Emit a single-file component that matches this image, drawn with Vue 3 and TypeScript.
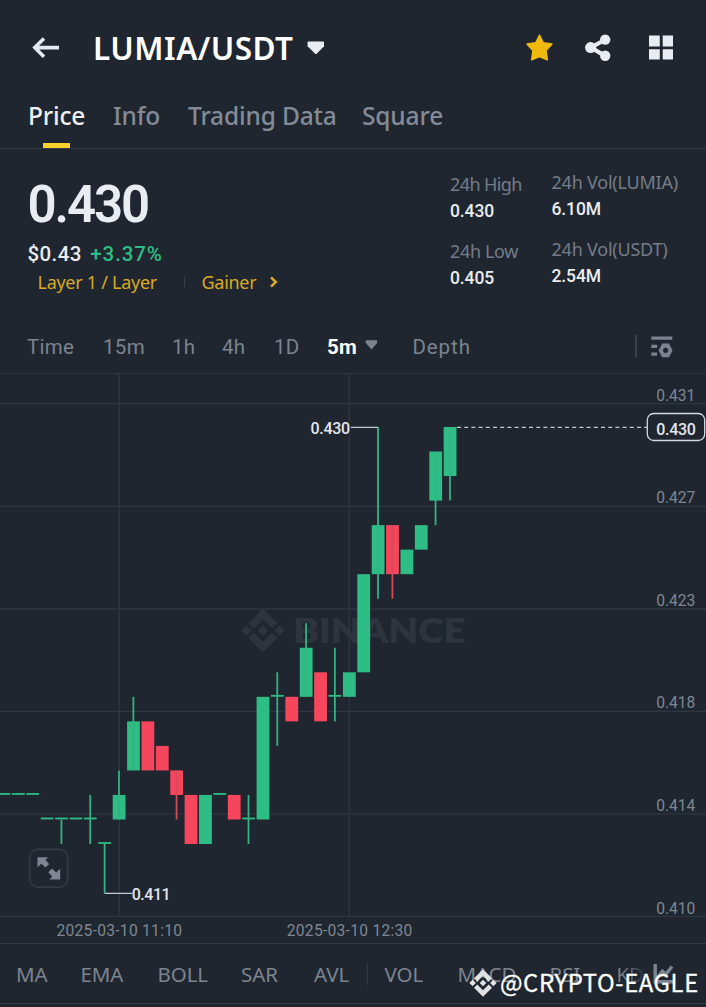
<script setup lang="ts">
interface Candle {
  k: number
  open: number
  close: number
  high?: number
  low?: number
  down?: boolean
}

const STEP_X = 14.39
const STEP_Y = 24.53
const ORIGIN_X = 119
const ORIGIN_Y = 427

const px = (k: number): number => ORIGIN_X + STEP_X * k
const py = (level: number): number => ORIGIN_Y + STEP_Y * level

// Levels count price steps below the 0.430 line.
const candles: Candle[] = [
  { k: -8, open: 15, close: 15 },
  { k: -7, open: 15, close: 15 },
  { k: -6, open: 15, close: 15 },
  { k: -5, open: 16, close: 16 },
  { k: -4, open: 16, close: 16, low: 17 },
  { k: -3, open: 16, close: 16 },
  { k: -2, open: 16, close: 16, high: 15, low: 17 },
  { k: -1, open: 17, close: 17, low: 19 },
  { k: 0, open: 16, close: 15, high: 14 },
  { k: 1, open: 14, close: 12, high: 11 },
  { k: 2, open: 12, close: 14, down: true },
  { k: 3, open: 13, close: 14, down: true },
  { k: 4, open: 14, close: 15, low: 16, down: true },
  { k: 5, open: 15, close: 17, down: true },
  { k: 6, open: 17, close: 15 },
  { k: 7, open: 15, close: 15 },
  { k: 8, open: 15, close: 16, down: true },
  { k: 9, open: 16, close: 16, high: 15, low: 17 },
  { k: 10, open: 16, close: 11 },
  { k: 11, open: 11, close: 11, high: 10, low: 13 },
  { k: 12, open: 11, close: 12, down: true },
  { k: 13, open: 11, close: 9, high: 8 },
  { k: 14, open: 10, close: 12, down: true },
  { k: 15, open: 11, close: 11, high: 9, low: 12 },
  { k: 16, open: 11, close: 10 },
  { k: 17, open: 10, close: 6 },
  { k: 18, open: 6, close: 4, high: 0, low: 7 },
  { k: 19, open: 4, close: 6, low: 7, down: true },
  { k: 20, open: 6, close: 5 },
  { k: 21, open: 5, close: 4 },
  { k: 22, open: 3, close: 1, low: 4 },
  { k: 23, open: 2, close: 0, low: 3 },
]

const shapes = candles.map((c) => {
  const top = Math.min(c.open, c.close)
  const bottom = Math.max(c.open, c.close)
  const flat = top === bottom
  return {
    id: c.k,
    cls: c.down ? 'down' : 'up',
    cx: px(c.k),
    x: px(c.k) - 6.3,
    y: flat ? py(top) - 1.9 : py(top),
    h: flat ? 1.8 : py(bottom) - py(top),
    wick: c.high !== undefined || c.low !== undefined,
    y1: py(c.high ?? top),
    y2: py(c.low ?? bottom),
  }
})

const gridRows: number[] = [403.7, 506.3, 609, 711.3, 813.9, 916.4]
const gridCols: number[] = [119.3, 349.3]
const axis = [
  { label: '0.431', y: 400.5 },
  { label: '0.427', y: 503 },
  { label: '0.423', y: 605.8 },
  { label: '0.418', y: 708.4 },
  { label: '0.414', y: 811 },
  { label: '0.410', y: 913.6 },
]
const tabs: string[] = ['Price', 'Info', 'Trading Data', 'Square']
const indicators: string[] = ['MA', 'EMA', 'BOLL', 'SAR', 'AVL', 'VOL', 'MACD', 'RSI', 'KD']
</script>

<template>
  <main class="screen">
    <header class="header">
      <svg class="back" width="28" height="22" viewBox="0 0 28 22">
        <path d="M27 10.6H2.5M12 1.4 2.8 10.6 12 19.8" />
      </svg>
      <h1>LUMIA/USDT</h1>
      <svg class="caret" width="18" height="14" viewBox="0 0 18 14">
        <path d="M.6 1.2Q.6.5 1.4.5H16.3Q17 .5 17 1.2V5.2L9.7 12.7Q8.9 13.4 8.1 12.7L.6 5.2Z" />
      </svg>
      <svg class="star" width="28" height="29" viewBox="0 0 28 29">
        <path d="M13.5 1.3 17.2 8.9 25.8 10.1 20 16.5 21.3 25.7 13.5 22.5 5.7 25.7 7 16.5 1.2 10.1 9.8 8.9Z" />
      </svg>
      <svg class="share" width="28" height="29" viewBox="0 0 28 29">
        <path d="M20.5 5.5 6 13.5 20.5 22.1" />
        <circle cx="20.2" cy="5.6" r="5.2" />
        <circle cx="5.6" cy="13.6" r="5.5" />
        <circle cx="20.2" cy="21.8" r="5.2" />
      </svg>
      <svg class="apps" width="26" height="26" viewBox="0 0 26 26">
        <path d="M1 .6h10.8v10.8H1zM14.7 .6h10.3v10.8H14.7zM1 14.2h10.8v10.4H1zM14.7 14.2h10.3v10.4H14.7z" />
      </svg>
    </header>

    <nav class="tabs">
      <span v-for="(tab, i) in tabs" :key="tab" :class="{ active: i === 0 }">{{ tab }}</span>
    </nav>

    <section class="summary">
      <div class="quote">
        <div class="last">0.430</div>
        <div class="change"><span>$0.43</span><span class="gain">+3.37%</span></div>
        <div class="tags">
          <span class="layer">Layer 1 / Layer</span>
          <i class="bar"></i>
          <span class="gainer">Gainer</span>
          <svg width="10" height="12" viewBox="0 0 10 12"><path d="M2 1.4 6.8 6 2 10.6" /></svg>
        </div>
      </div>
      <dl class="stats">
        <dt class="high">24h High</dt>
        <dd>0.430</dd>
        <dt class="low">24h Low</dt>
        <dd>0.405</dd>
      </dl>
      <dl class="stats volume">
        <dt>24h Vol(LUMIA)</dt>
        <dd>6.10M</dd>
        <dt>24h Vol(USDT)</dt>
        <dd>2.54M</dd>
      </dl>
    </section>

    <nav class="intervals">
      <span>Time</span>
      <span>15m</span>
      <span>1h</span>
      <span>4h</span>
      <span>1D</span>
      <span class="current">5m</span>
      <svg class="mini" width="13" height="10" viewBox="0 0 13 10"><path d="M.8.3H12.2V3L6.5 9.6.8 3Z" /></svg>
      <span class="depth">Depth</span>
      <i class="rule"></i>
      <svg class="settings" width="22" height="23" viewBox="0 0 22 23">
        <path d="M.3 .6h21v3.2H.3zM.3 8.8h5.8v3.2H.3zM.3 16.6h5.8v3.2H.3z" />
        <path fill-rule="evenodd" d="M11.2 7.6H18L21.6 14.4 18 21.2H11.2L7.6 14.4ZM14.6 11.8a2.6 2.6 0 1 0 .01 0z" />
      </svg>
    </nav>

    <svg class="chart" width="706" height="570" viewBox="0 373 706 570">
      <g class="grid">
        <line x1="0" x2="706" y1="373.3" y2="373.3" />
        <line v-for="y in gridRows" :key="y" x1="0" x2="706" :y1="y" :y2="y" />
        <line v-for="x in gridCols" :key="x" :x1="x" :x2="x" y1="373" y2="916" />
      </g>
      <g class="brand">
        <path d="M263 608.5 277.5 623 272 628.5 263 619.5 254 628.5 248.5 623ZM263 652.5 277.5 638 272 632.5 263 641.5 254 632.5 248.5 638ZM263 625.2 268.3 630.5 263 635.8 257.7 630.5ZM246.3 625.2 251.6 630.5 246.3 635.8 241 630.5ZM279.7 625.2 285 630.5 279.7 635.8 274.4 630.5Z" />
        <text x="293" y="643" textLength="172.5" lengthAdjust="spacingAndGlyphs">BINANCE</text>
      </g>
      <g v-for="s in shapes" :key="s.id" :class="s.cls">
        <rect :x="s.x" :y="s.y" width="12.8" :height="s.h" />
        <line v-if="s.wick" :x1="s.cx" :x2="s.cx" :y1="s.y1" :y2="s.y2" />
      </g>
      <path class="lead" d="M351 427.3H378M104.6 893.3H132" />
      <path class="lead dash" d="M457 427.3H647" />
      <g class="note">
        <text x="310.5" y="434" textLength="39.5">0.430</text>
        <text x="131.7" y="900" textLength="39">0.411</text>
      </g>
      <g class="axis">
        <text v-for="a in axis" :key="a.label" x="656.3" :y="a.y" textLength="39">{{ a.label }}</text>
        <text x="56.5" y="936" textLength="125.5">2025-03-10 11:10</text>
        <text x="286.8" y="936" textLength="125.5">2025-03-10 12:30</text>
      </g>
      <rect class="pill" x="647.3" y="413.5" width="57.4" height="27" rx="6.5" />
      <text class="pill-text" x="656.3" y="435.3" textLength="39.5">0.430</text>
      <g class="expand">
        <rect x="29.7" y="849.2" width="38" height="38" rx="8.5" />
        <path d="M37.5 857.2H48.2L45.4 860 49.2 864 45.4 867.6 41.3 863.7 37.5 867.3ZM60.2 879.4H49.3L52.3 876.4 48.3 872.3 52 868.6 56.2 872.6 60.2 868.8Z" />
      </g>
    </svg>

    <footer class="indicators">
      <span v-for="name in indicators" :key="name" :class="name.toLowerCase()">{{ name }}</span>
      <svg class="trend" width="22" height="22" viewBox="0 0 22 22">
        <path d="M2.2 1V18.7H20.5M4 15 9.5 8.2 13 11.2 19 3.5" />
      </svg>
    </footer>

    <div class="signature">
      <svg width="28" height="28" viewBox="0 0 28 28">
        <path d="M14 .2 23 9.2 19.7 12.5 14 6.8 8.3 12.5 5 9.2ZM14 27.8 23 18.8 19.7 15.5 14 21.2 8.3 15.5 5 18.8ZM14 10.7 17.3 14 14 17.3 10.7 14ZM3.6 10.7 6.9 14 3.6 17.3.3 14ZM24.4 10.7 27.7 14 24.4 17.3 21.1 14Z" />
      </svg>
      <span>@CRYPTO-EAGLE</span>
    </div>
  </main>
</template>

<style>
body {
  margin: 0;
  background: #1f262f;
}
</style>

<style scoped>
.screen {
  position: relative;
  width: 706px;
  height: 1007px;
  overflow: hidden;
  background: #1f262f;
  color: #eaecef;
  font-family: "Noto Sans", "Open Sans", sans-serif;
}
svg {
  display: block;
  flex: none;
}
span {
  white-space: nowrap;
}
.header {
  display: grid;
  grid-template-columns: 61px 214px 219px 59px 63px 28px;
  align-items: center;
  height: 95px;
  padding-left: 32px;
}
h1 {
  margin: 0;
  font-size: 31.5px;
  font-weight: 600;
  line-height: 96px;
  letter-spacing: 0.45px;
  color: #fff;
}
.back path {
  fill: none;
  stroke: #e6e9f0;
  stroke-width: 3.6;
}
.caret,
.share,
.apps {
  fill: #eaecf4;
}
.star {
  fill: #f0b90b;
  stroke: #f0b90b;
  stroke-width: 1.6;
  stroke-linejoin: round;
}
.share path {
  fill: none;
  stroke: #eaecf4;
  stroke-width: 4.2;
}
.tabs {
  display: grid;
  grid-template-columns: 85px 75px 174px 100px;
  height: 53px;
  padding-left: 28px;
  border-bottom: 1px solid #343b45;
  font-size: 24.5px;
  font-weight: 500;
  line-height: 42px;
  letter-spacing: -0.15px;
  color: #848b98;
}
.tabs .active {
  display: flex;
  flex-direction: column;
  color: #eef0f5;
}
.active::after {
  content: "";
  width: 27px;
  height: 5px;
  margin: 6px 0 0 15px;
  background: #f8d12f;
}
.summary {
  display: grid;
  grid-template-columns: 422.5px 101.5px 150px;
  height: 171px;
  padding-left: 27.5px;
}
.quote {
  padding-top: 26px;
}
.last {
  font: 600 51px/60px Roboto, sans-serif;
  letter-spacing: -2.1px;
  color: #eaecf4;
}
.change {
  display: flex;
  gap: 8.5px;
  font: 500 20.5px/38px Roboto, sans-serif;
  letter-spacing: 0.4px;
}
.gain {
  letter-spacing: 0.9px;
  color: #2ebd85;
}
.tags {
  display: flex;
  align-items: center;
  height: 20px;
  margin-top: -1px;
  padding-left: 10px;
  font-size: 18px;
  line-height: 20px;
  letter-spacing: -0.28px;
  color: #d9a928;
}
.layer {
  width: 146px;
}
.bar {
  width: 1px;
  height: 10px;
  background: #3b424d;
}
.gainer {
  width: 67px;
  margin-left: 17px;
}
.tags path {
  fill: none;
  stroke: #d9a928;
  stroke-width: 2.6;
}
.stats {
  margin: 0;
  padding-top: 22px;
}
.volume {
  padding-top: 20px;
}
dt {
  font-size: 18px;
  line-height: 26.5px;
  letter-spacing: -0.22px;
  color: #757c88;
  white-space: nowrap;
}
.high {
  letter-spacing: -0.6px;
}
.low {
  letter-spacing: -0.35px;
}
dd {
  margin: 0 0 14px;
  font: 500 17.5px/27px Roboto, sans-serif;
  letter-spacing: -0.1px;
}
dd:nth-of-type(1) {
  margin-bottom: 13.5px;
}
.intervals {
  display: grid;
  grid-template-columns: 76px 69px 50px 52px 53px 38px 47.5px 222.5px 16px 22px;
  align-items: center;
  height: 53px;
  padding-left: 27px;
  font: 400 20.5px/55px Roboto, sans-serif;
  letter-spacing: 0.3px;
  color: #7c838f;
}
.intervals .depth {
  letter-spacing: 0.9px;
}
.current {
  font-weight: 700;
  color: #fff;
}
.mini {
  margin-top: -5px;
  fill: #7c838f;
}
.rule {
  width: 1.5px;
  height: 22px;
  margin-top: -3px;
  background: #3b424d;
}
.settings {
  margin-top: -1px;
  fill: #7c838f;
}
.chart {
  font-family: Roboto, sans-serif;
}
.grid line {
  stroke: #2f3640;
  stroke-width: 1.3;
}
.brand {
  fill: #2d343e;
}
.brand text {
  font: 800 34.5px Lato, sans-serif;
}
.up rect {
  fill: #2ebd85;
}
.down rect {
  fill: #f6465d;
}
.up line {
  stroke: #35b283;
  stroke-width: 1.8;
}
.down line {
  stroke: #d94859;
  stroke-width: 1.8;
}
.lead {
  fill: none;
  stroke: #c4c8cf;
  stroke-width: 1.3;
}
.dash {
  stroke-dasharray: 4 3.2;
}
.note text,
.pill-text {
  font-size: 16px;
  font-weight: 500;
  fill: #e4e7ed;
}
.axis text {
  font-size: 15.6px;
  fill: #7f8692;
}
.pill {
  fill: #1f262f;
  stroke: #d5d8de;
  stroke-width: 1.3;
}
.expand rect {
  fill: #1f262f;
  stroke: #343b45;
  stroke-width: 1.5;
}
.expand path {
  fill: #7f8692;
}
.indicators {
  display: grid;
  grid-template-columns: 64.5px 77px 83.5px 73px 70.5px 73px 92px 67px 36px 22px;
  align-items: center;
  height: 61px;
  box-sizing: border-box;
  margin-right: -10px;
  padding-left: 16px;
  border: solid #343b45;
  border-width: 1px 0;
  background: linear-gradient(#343b45, #343b45) 367px 19px / 1px 22px no-repeat;
  font-size: 20.5px;
  line-height: 58px;
  letter-spacing: -0.1px;
  color: #7d8490;
}
.indicators span {
  padding-top: 1px;
}
.indicators .kd {
  background: linear-gradient(90deg, #7d8490 20%, #303741 95%);
  background-size: 26px 100%;
  background-clip: text;
  color: transparent;
}
.trend path {
  fill: none;
  stroke: #7d8490;
  stroke-width: 3.4;
}
.signature {
  position: absolute;
  top: 965px;
  left: 469px;
  display: flex;
  align-items: center;
  gap: 3px;
  height: 36px;
  font: 400 23.8px/34px "Noto Sans CJK SC", sans-serif;
  letter-spacing: 0.6px;
  color: #fff;
}
.signature span {
  margin-top: -2px;
  -webkit-text-stroke: 0.3px #fff;
}
.signature path {
  fill: #dfe1e4;
}
</style>
